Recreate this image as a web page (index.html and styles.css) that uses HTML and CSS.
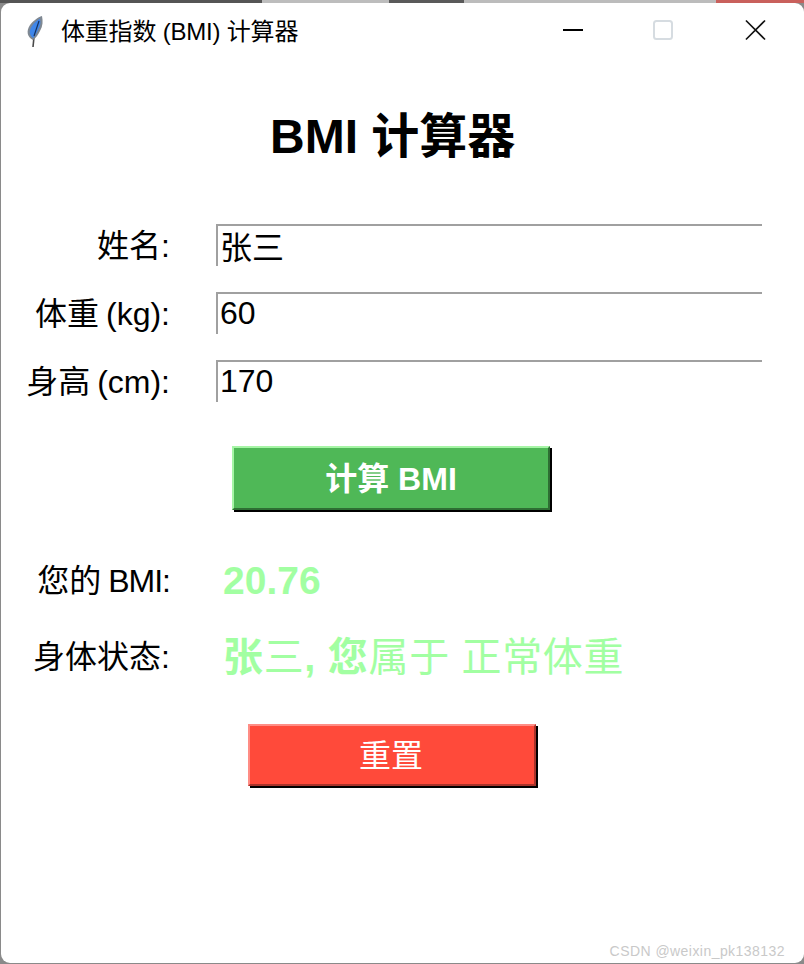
FILE: index.html
```html
<!DOCTYPE html>
<html lang="zh-CN">
<head>
<meta charset="utf-8">
<title>体重指数 (BMI) 计算器</title>
<link rel="stylesheet" href="styles.css">
</head>
<body>
<div class="backdrop-strip">
  <span class="seg seg-dark-a"></span><span class="seg seg-light-a"></span><span class="seg seg-dark-b"></span><span class="seg seg-light-b"></span><span class="seg seg-red"></span>
</div>
<div class="window">
  <header class="titlebar">
    <svg class="feather" viewBox="0 0 20 32" aria-hidden="true">
      <path d="M9 31 L10 21" stroke="#4a4a4a" stroke-width="1.6" fill="none"/>
      <path d="M9 24 C3 21 2 15 6 9 C9 5 14 1 18 0 C19 5 19 10 16 15 C14 19 12 22 9 24 Z" fill="#7f8892"/>
      <path d="M9 22 C5 19 5 14 8 10 C10 7 13 4 16 3 C17 7 16 11 14 14 C12 18 11 20 9 22 Z" fill="#3f86ea"/>
      <path d="M10 20 L15 5" stroke="#16305c" stroke-width="1.2" fill="none"/>
    </svg>
    <span class="window-title">体重指数 (BMI) 计算器</span>
    <div class="controls">
      <span class="ctl"><svg width="20" height="20" viewBox="0 0 20 20"><path d="M0 10h20" stroke="#000" stroke-width="2"/></svg></span>
      <span class="ctl"><svg width="20" height="20" viewBox="0 0 20 20"><rect x="1" y="1" width="18" height="18" rx="2.5" fill="none" stroke="#d6dce1" stroke-width="2"/></svg></span>
      <span class="ctl ctl-close"><svg width="22" height="22" viewBox="0 0 22 22"><path d="M1 1L21 21M21 1L1 21" stroke="#111" stroke-width="1.7"/></svg></span>
    </div>
  </header>
  <main class="content">
    <h1 class="heading">BMI 计算器</h1>
    <div class="fields">
      <label class="label">姓名:</label><input class="entry" value="张三">
      <label class="label">体重 (kg):</label><input class="entry" value="60">
      <label class="label">身高 (cm):</label><input class="entry" value="170">
    </div>
    <button class="btn btn-calc">计算 BMI</button>
    <div class="results">
      <span class="label">您的 <span class="tight">BMI:</span></span><span class="value value-num">20.76</span>
      <span class="label">身体状态:</span><span class="value value-text"><b>张</b>三<b>, 您</b>属于 正常体重</span>
    </div>
    <button class="btn btn-reset">重置</button>
  </main>
  <div class="watermark">CSDN @weixin_pk138132</div>
</div>
</body>
</html>
```
FILE: styles.css
```css
* { box-sizing: border-box; }
html, body { margin: 0; height: 964px; overflow: hidden; }
body {
  background: #8a8a8a;
  font-family: "Liberation Sans", "Noto Sans CJK SC", sans-serif;
  color: #000;
}
.backdrop-strip { display: flex; height: 3px; }
.seg { display: block; height: 3px; }
.seg-dark-a { width: 262px; background: #555; }
.seg-light-a { width: 127px; background: #bdbdbd; }
.seg-dark-b { width: 75px; background: #5a5a5a; }
.seg-light-b { width: 252px; background: #bcbcbc; }
.seg-red { flex: 1; background: #c9605c; }
.window {
  position: relative;
  width: 803px;
  height: 960px;
  margin-left: 1px;
  background: #fff;
  border-radius: 9px;
}
.titlebar {
  display: flex;
  align-items: center;
  height: 57px;
  padding-left: 23px;
}
.feather { width: 20px; height: 32px; flex: none; }
.window-title {
  margin-left: 17px;
  font-size: 24px;
  line-height: 32px;
  letter-spacing: -0.2px;
  white-space: nowrap;
}
.controls {
  display: flex;
  align-items: center;
  margin-left: auto;
  margin-top: -3px;
  padding-right: 38px;
  gap: 69px;
}
.ctl { display: flex; width: 21px; justify-content: center; }
.ctl-close { margin-left: 3px; }
.content { display: flex; flex-direction: column; align-items: flex-start; }
.heading {
  align-self: flex-start;
  margin: 44px 0 0 269px;
  font-size: 48px;
  line-height: 66px;
  font-weight: 700;
  white-space: nowrap;
}
.fields {
  display: grid;
  grid-template-columns: 169px 546px;
  grid-auto-rows: 42px;
  column-gap: 46px;
  row-gap: 26px;
  margin-top: 54px;
  align-items: center;
}
.label {
  font-size: 32px;
  line-height: 42px;
  text-align: right;
  white-space: nowrap;
  font-weight: 400;
  word-spacing: -2px;
}
.fields .label { height: 42px; line-height: 44px; }
.tight { letter-spacing: -1px; }
.entry {
  display: block;
  width: 546px;
  height: 42px;
  margin: 0;
  padding: 0 0 2px 2px;
  border: 0;
  border-top: 2px solid #a0a0a0;
  border-left: 2px solid #a0a0a0;
  border-radius: 0;
  outline: 0;
  background: #fff;
  font: 400 32px/37px "Liberation Sans", "Noto Sans CJK SC", sans-serif;
  color: #000;
}
.btn {
  display: block;
  padding: 0 0 5px;
  border-style: solid;
  border-width: 2px;
  border-radius: 0;
  font-family: "Liberation Sans", "Noto Sans CJK SC", sans-serif;
  font-size: 32px;
  color: #fff;
  white-space: nowrap;
}
.btn-calc {
  width: 318px;
  height: 64px;
  margin: 44px 0 0 231px;
  font-weight: 700;
  background: #4fb857;
  border-color: #a6f5a6 #2e6e33 #2e6e33 #a6f5a6;
  box-shadow: 2px 2px 0 #000;
}
.btn-reset {
  width: 288px;
  height: 62px;
  margin: 46px 0 0 247px;
  padding-right: 2px;
  font-weight: 400;
  background: #ff4a3a;
  border-color: #ff8d85 #a8332a #a8332a #ff8d85;
  box-shadow: 2px 2px 0 #000;
}
.results {
  display: grid;
  grid-template-columns: 169px auto;
  column-gap: 53px;
  row-gap: 34px;
  margin-top: 50px;
  align-items: center;
}
.value {
  color: #a2ffa2;
  line-height: 42px;
  white-space: nowrap;
}
.value-num { font-size: 39px; font-weight: 700; }
.value-text { font-size: 40px; font-weight: 400; letter-spacing: 0.65px; }
.watermark {
  position: absolute;
  right: 19px;
  bottom: 3px;
  font-size: 14px;
  line-height: 18px;
  letter-spacing: 0.45px;
  color: #c9c9c9;
}
```
